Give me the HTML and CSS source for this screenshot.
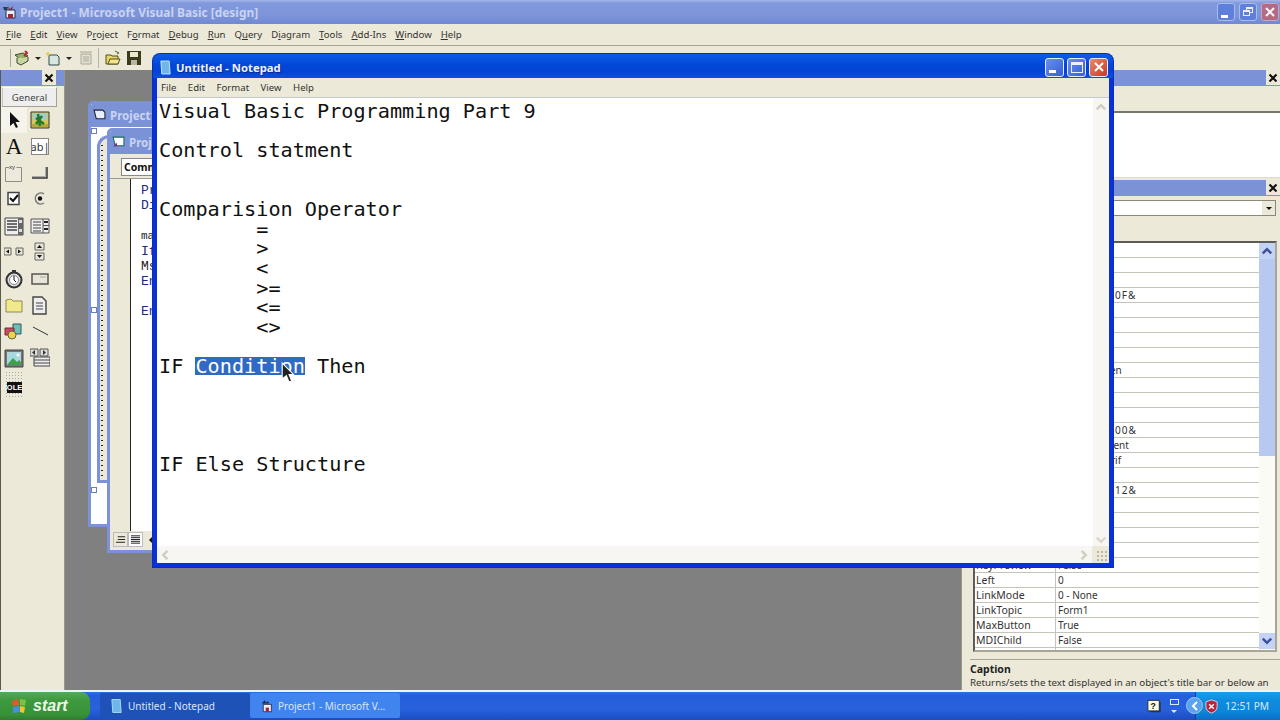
FILE: index.html
```html
<!DOCTYPE html>
<html lang="en">
<head>
<meta charset="utf-8">
<title>Untitled - Notepad</title>
<link rel="stylesheet" href="styles.css">
</head>
<body>
<div class="screen">
  <header class="vb-title">
    <svg class="vb-icon" viewBox="0 0 16 16"><path d="M1 3h5l-1 3H2z" fill="#2b3a55"/><path d="M4 6h9v8H4z" fill="#e9eef8" stroke="#20304f"/><path d="M6 2l2 3 3-3-1 4H7z" fill="#7a2a3a"/><path d="M6 10h5v4H6z" fill="#a8213a"/></svg>
    <span class="vb-title-text">Project1 - Microsoft Visual Basic [design]</span>
    <div class="vb-btns">
      <span class="vb-btn"><i class="min-bar"></i></span>
      <span class="vb-btn"><i class="restore-a"></i><i class="restore-b"></i></span>
      <span class="vb-btn vb-close"><svg class="x-ic" viewBox="0 0 12 12"><path d="M2 2l8 8m0-8l-8 8" stroke="#f4f0f4" stroke-width="2.200" fill="none"/></svg></span>
    </div>
  </header>
  <nav class="vb-menu">
    <span><u>F</u>ile</span><span><u>E</u>dit</span><span><u>V</u>iew</span><span>P<u>r</u>oject</span><span>F<u>o</u>rmat</span><span><u>D</u>ebug</span><span><u>R</u>un</span><span>Q<u>u</u>ery</span><span>D<u>i</u>agram</span><span><u>T</u>ools</span><span><u>A</u>dd-Ins</span><span><u>W</u>indow</span><span><u>H</u>elp</span>
  </nav>
  <div class="vb-toolbar">
    <i class="grip"></i>
    <svg class="tb-i" viewBox="0 0 16 16"><path d="M1 5l8-2 5 3-8 3z" fill="#9ab56a" stroke="#3a4a2a"/><path d="M3 8v5l4 2 7-4V7" fill="#c7d6a0" stroke="#3a4a2a"/><path d="M11 1l2 2-3 3" stroke="#b3263a" stroke-width="2" fill="none"/></svg>
    <i class="drop"></i>
    <svg class="tb-i tb-second" viewBox="0 0 16 16"><path d="M4 5h8l2 2v8H4z" fill="#d7e6e0" stroke="#2f4a4a"/><path d="M3 1l1 2 2 1-2 1-1 2-1-2-2-1 2-1z" fill="#e6cf5a"/></svg>
    <i class="drop"></i>
    <svg class="tb-i tb-faded" viewBox="0 0 16 16"><path d="M3 4h10v10H3z" fill="#e3e0d0" stroke="#aaa79a"/><path d="M5 7h6M5 9h6M5 11h6M2 2h12" stroke="#aaa79a" fill="none"/></svg>
    <i class="sep"></i>
    <svg class="tb-i" viewBox="0 0 16 16"><path d="M1 5h5l1 1h6v8H1z" fill="#e6d36a" stroke="#55501f"/><path d="M3 14l2-5h10l-2 5z" fill="#f3e68a" stroke="#55501f"/><path d="M10 1l4 2-2 1" stroke="#4a6a2a" fill="none"/></svg>
    <svg class="tb-i tb-save" viewBox="0 0 16 16"><path d="M1 1h14v14H1z" fill="#3c3c1c"/><path d="M4 2h8v5H4z" fill="#e9e6d2"/><path d="M5 10h6v5H5z" fill="#b9b7a4"/></svg>
  </div>

  <div class="workspace">
    <aside class="toolbox">
      <div class="panel-head"><span class="x-box"><svg class="x-ic-b" viewBox="0 0 10 10"><path d="M1.500 1.500l7 7m0-7l-7 7" stroke="#111" stroke-width="2.200" fill="none"/></svg></span></div>
      <div class="tab-general">General</div>
      <div class="tools">
        <span class="tool tool-on"><svg viewBox="0 0 20 20"><path d="M6 2l0 14 3.500-3 2.500 5 2-1-2.500-5h4.500z" fill="#111"/></svg></span>
        <span class="tool"><svg viewBox="0 0 20 20"><path d="M1 2h18v16H1z" fill="#d3c75a" stroke="#333"/><path d="M3 4h14v6H3z" fill="#9bd0c8"/><path d="M2 14h16v3H2z" fill="#b7a83a"/><path d="M8 4l2 12M6 8l8 6M12 6l-6 8" stroke="#1f7a2a" stroke-width="2.500"/></svg></span>
        <span class="tool tool-a">A</span>
        <span class="tool tool-ab">ab|</span>
        <span class="tool"><svg viewBox="0 0 20 20"><path d="M1.500 4.500v14h16v-14h-5M5 4.500H1.500" fill="#eee9dc" stroke="#8f8c80"/><text x="5" y="6" class="xy">xy</text></svg></span>
        <span class="tool"><svg viewBox="0 0 20 20"><path d="M17 4v11H2" fill="none" stroke="#333" stroke-width="1.500"/><path d="M2 13.500h13.500V4" fill="none" stroke="#aaa"/></svg></span>
        <span class="tool"><svg viewBox="0 0 20 20"><path d="M4 3.500h11v12H4z" fill="#fff" stroke="#444" stroke-width="1.500"/><path d="M6 9l3 3 5-6" fill="none" stroke="#111" stroke-width="2"/></svg></span>
        <span class="tool"><svg viewBox="0 0 20 20"><path d="M14 5a5.500 5.500 0 1 0 0 9" fill="none" stroke="#777" stroke-width="1.500"/><circle cx="10" cy="9.500" r="2.200" fill="#111"/></svg></span>
        <span class="tool"><svg viewBox="0 0 20 20"><path d="M1 2h18v17H1z" fill="#eee" stroke="#444"/><path d="M3 5h10M3 8h10M3 11h10M3 14h10" stroke="#444" stroke-width="1.500"/><path d="M14 2h5v17h-5z" fill="#666"/><path d="M15 4h3v3h-3zM15 13h3v3h-3z" fill="#ddd"/></svg></span>
        <span class="tool"><svg viewBox="0 0 20 20"><path d="M1 3h18v14H1z" fill="#eee" stroke="#555"/><path d="M3 6h8M3 9h8M3 12h8M3 15h8" stroke="#444"/><path d="M13 3v14M13 9.500h6" stroke="#555"/><path d="M14 6h4M14 13h4" stroke="#222" stroke-width="2"/></svg></span>
        <span class="tool"><svg viewBox="0 0 20 20"><path d="M0 6h7v7H0zM12 6h7v7h-7z" fill="#e8e5d8" stroke="#666"/><path d="M5 7.500v4l-3-2zM14 7.500v4l3-2z" fill="#111"/></svg></span>
        <span class="tool"><svg viewBox="0 0 20 20"><path d="M5 1h9v7H5zM5 11h9v7H5z" fill="#e8e5d8" stroke="#666"/><path d="M7 6h5L9.500 3zM7 13h5l-2.500 3z" fill="#111"/></svg></span>
        <span class="tool"><svg viewBox="0 0 20 20"><circle cx="10" cy="11" r="7.500" fill="#ddd" stroke="#333" stroke-width="2"/><circle cx="10" cy="11" r="4.500" fill="#fff" stroke="#888"/><path d="M8 1h4v2H8z" fill="#333"/><path d="M10 7v4l2 2" stroke="#111" fill="none"/></svg></span>
        <span class="tool"><svg viewBox="0 0 20 20"><path d="M2 5h16v10H2z" fill="#e8e5d8" stroke="#555" stroke-width="1.500"/><path d="M10 8h6" stroke="#aaa"/></svg></span>
        <span class="tool"><svg viewBox="0 0 20 20"><path d="M2 5l5-1 2 2h9v11H2z" fill="#f2ea8a" stroke="#8d8a50"/></svg></span>
        <span class="tool"><svg viewBox="0 0 20 20"><path d="M3 2h9l4 4v13H3z" fill="#eee" stroke="#444" stroke-width="1.400"/><path d="M6 8h7M6 11h7M6 14h7" stroke="#444"/></svg></span>
        <span class="tool"><svg viewBox="0 0 20 20"><path d="M9 3h8v10H9z" fill="#6cc0b8" stroke="#356"/><path d="M1 7h9v7H1z" fill="#d0446a" stroke="#633"/><circle cx="8" cy="14" r="4" fill="#ecd34d" stroke="#664"/></svg></span>
        <span class="tool"><svg viewBox="0 0 20 20"><path d="M3 6l15 8" stroke="#333"/></svg></span>
        <span class="tool"><svg viewBox="0 0 20 20"><path d="M1 2h18v17H1z" fill="#777" stroke="#444"/><path d="M3 4h14v13H3z" fill="#a9d8e0"/><path d="M3 17l6-7 4 4 2-2 2 2v3z" fill="#3ca04a"/><circle cx="14" cy="7" r="1.500" fill="#fff"/></svg></span>
        <span class="tool"><svg viewBox="0 0 20 20"><path d="M0 1h8v7H0zM10 1h8v7h-8z" fill="#ddd" stroke="#555"/><path d="M5 2v5L2 4.500zM13 2v5l3-2.500z" fill="#333"/><path d="M4 9v9h16v-9zM4 12h16M4 15h16" fill="#eee" stroke="#444"/></svg></span>
        <span class="tool tool-ole"><b>OLE</b></span>
      </div>
    </aside>

    <main class="mdi">
      <section class="child child-project">
        <div class="child-title"><svg class="child-icon" viewBox="0 0 12 12"><path d="M1 1h8l2 2v6H3z" fill="#e8eefc" stroke="#223"/></svg><span>Project1 - Form1 (Form)</span></div>
        <i class="handle handle-a"></i><i class="handle handle-b"></i><i class="handle handle-c"></i>
        <div class="form-inner"></div>
      </section>
      <section class="child child-code">
        <div class="child-title"><svg class="child-icon" viewBox="0 0 12 12"><path d="M1 1h10v8H3z" fill="#fff" stroke="#1c6a5a"/><path d="M1 10l3-4 1 3z" fill="#7a2a8a"/></svg><span>Project1 - Form1 (Code)</span></div>
        <div class="code-combo">Command1</div>
        <div class="code-body">
          <div class="code-gutter"></div>
          <pre class="code-text"><span class="kw">Private Sub Command1_Click()</span>
<span class="kw">Dim</span> a

<span class="ma">ma = 1</span>
<span class="kw">If</span> a = 1 Then
MsgBox "x"
<span class="kw">End If</span>

<span class="kw">End Sub</span></pre>
        </div>
        <div class="code-foot">
          <span class="view-btn"><svg viewBox="0 0 12 12"><path d="M3 3h8M3 6h8M1 9h10" stroke="#111" fill="none"/></svg></span>
          <span class="view-btn view-on"><svg viewBox="0 0 12 12"><path d="M1 2h10M1 4h10M1 6h10M1 8h10M1 10h10" stroke="#111" fill="none"/></svg></span>
          <span class="scroll-left"></span>
        </div>
      </section>
    </main>

    <aside class="side">
      <div class="panel-head panel-head-project"><span class="x-box"><svg class="x-ic-b" viewBox="0 0 10 10"><path d="M1.500 1.500l7 7m0-7l-7 7" stroke="#111" stroke-width="2.200" fill="none"/></svg></span></div>
      <div class="project-bar"></div>
      <div class="project-tree"></div>
      <div class="panel-head panel-head-prop"><span class="x-box"><svg class="x-ic-b" viewBox="0 0 10 10"><path d="M1.500 1.500l7 7m0-7l-7 7" stroke="#111" stroke-width="2.200" fill="none"/></svg></span></div>
      <div class="prop-combo-wrap"><div class="prop-combo"><span class="combo-arrow"></span></div></div>
      <div class="prop-tabs"></div>
      <div class="prop-grid">
        <div class="prop-rows">
          <div class="row"><span>(Name)</span><span>Form1</span></div>
          <div class="row"><span>Appearance</span><span>1 - 3D</span></div>
          <div class="row"><span>AutoRedraw</span><span>False</span></div>
          <div class="row"><span>BackColor</span><span class="hex">&amp;H8000000F&amp;</span></div>
          <div class="row"><span>BorderStyle</span><span>2 - Sizable</span></div>
          <div class="row"><span>Caption</span><span>Form1</span></div>
          <div class="row"><span>ClipControls</span><span>True</span></div>
          <div class="row"><span>ControlBox</span><span>True</span></div>
          <div class="row"><span>DrawMode</span><span>13 - Copy Pen</span></div>
          <div class="row"><span>DrawStyle</span><span>0 - Solid</span></div>
          <div class="row"><span>DrawWidth</span><span>1</span></div>
          <div class="row"><span>Enabled</span><span>True</span></div>
          <div class="row"><span>FillColor</span><span class="hex">&amp;H00000000&amp;</span></div>
          <div class="row"><span>FillStyle</span><span>1 - Transparent</span></div>
          <div class="row"><span>Font</span><span>MS Sans Serif</span></div>
          <div class="row"><span>FontTransparent</span><span>True</span></div>
          <div class="row"><span>ForeColor</span><span class="hex">&amp;H80000012&amp;</span></div>
          <div class="row"><span>HasDC</span><span>True</span></div>
          <div class="row"><span>Height</span><span>3600</span></div>
          <div class="row"><span>HelpContextID</span><span>0</span></div>
          <div class="row"><span>Icon</span><span>(Icon)</span></div>
          <div class="row"><span>KeyPreview</span><span>False</span></div>
          <div class="row"><span>Left</span><span>0</span></div>
          <div class="row"><span>LinkMode</span><span>0 - None</span></div>
          <div class="row"><span>LinkTopic</span><span>Form1</span></div>
          <div class="row"><span>MaxButton</span><span>True</span></div>
          <div class="row"><span>MDIChild</span><span>False</span></div>
          <div class="row"><span></span><span></span></div>
        </div>
        <div class="prop-scroll">
          <span class="sb-btn"><svg viewBox="0 0 10 10"><path d="M1.500 7l3.500-3.500L8.500 7" fill="none" stroke="#3a4f9a" stroke-width="2"/></svg></span>
          <span class="sb-thumb"></span>
          <span class="sb-space"></span>
          <span class="sb-btn sb-down"><svg viewBox="0 0 10 10"><path d="M1.500 3l3.500 3.500L8.500 3" fill="none" stroke="#3a4f9a" stroke-width="2"/></svg></span>
        </div>
      </div>
      <div class="prop-desc">
        <b>Caption</b>
        <span>Returns/sets the text displayed in an object's title bar or below an</span>
      </div>
    </aside>
  </div>

  <footer class="taskbar">
    <div class="start">
      <svg class="flag" viewBox="0 0 18 18"><path d="M2 4l6-2 1 6-6 1z" fill="#e2572c"/><path d="M10 2l6 1-1 6-5-1z" fill="#7cc242"/><path d="M3 10l6-1 1 6-7 1z" fill="#4a8ee0"/><path d="M10 9l5 1-1 6-4-1z" fill="#f2c62e"/></svg>
      <span>start</span>
    </div>
    <div class="task task-active">
      <svg class="task-ic" viewBox="0 0 14 16"><path d="M2 1h9l1 14H3z" fill="#6fb6ea" stroke="#a9dcf7"/></svg>
      <span>Untitled - Notepad</span>
    </div>
    <div class="task">
      <svg class="task-ic" viewBox="0 0 16 16"><path d="M2 5l4-4 1 3 3-2 1 3H5z" fill="#223"/><path d="M4 6h10v9H4z" fill="#eef" stroke="#223"/><path d="M7 10h4v5H7z" fill="#a8213a"/></svg>
      <span>Project1 - Microsoft V...</span>
    </div>
    <div class="task-fill">
      <svg class="help-ic" viewBox="0 0 16 16"><path d="M1 1h13v12H1z" fill="#fbfbe8" stroke="#222"/><path d="M15 3v11H4" stroke="#223" fill="none"/><text x="4" y="11" class="q">?</text></svg>
      <div class="lang-ic"><i></i><i></i></div>
    </div>
    <div class="tray">
      <span class="chevron"><svg viewBox="0 0 10 10"><path d="M7 1L3 5l4 4" fill="none" stroke="#fff" stroke-width="2"/></svg></span>
      <svg class="shield" viewBox="0 0 16 16"><path d="M8 1l6 2v5c0 4-3 6-6 7-3-1-6-3-6-7V3z" fill="#b8243a" stroke="#d8d8e8"/><path d="M5.500 5.500l5 5m0-5l-5 5" stroke="#fff" stroke-width="1.500"/></svg>
      <span class="clock">12:51 PM</span>
    </div>
  </footer>

  <section class="notepad">
    <div class="np-title">
      <svg class="np-icon" viewBox="0 0 14 16"><path d="M2 1h9l1 14H3z" fill="#6fb6ea" stroke="#c9ecfa"/></svg>
      <span class="np-title-text">Untitled - Notepad</span>
      <div class="np-btns">
        <span class="np-btn"><i class="np-min"></i></span>
        <span class="np-btn"><i class="np-max"></i></span>
        <span class="np-btn np-close"><svg class="x-ic" viewBox="0 0 12 12"><path d="M2 2l8 8m0-8l-8 8" stroke="#fff" stroke-width="2" fill="none"/></svg></span>
      </div>
    </div>
    <div class="np-body">
      <nav class="np-menu"><span>File</span><span>Edit</span><span>Format</span><span>View</span><span>Help</span></nav>
      <div class="np-edit">
        <pre class="np-text">Visual Basic Programming Part 9

Control statment


Comparision Operator
        =
        &gt;
        &lt;
        &gt;=
        &lt;=
        &lt;&gt;

IF <mark class="sel">Condition</mark> Then




IF Else Structure</pre>
        <div class="np-vscroll">
          <span class="np-arrow"><svg viewBox="0 0 10 10"><path d="M1.500 7l3.500-3.500L8.500 7" fill="none" stroke="#cfccc0" stroke-width="2"/></svg></span>
          <span class="np-arrow"><svg viewBox="0 0 10 10"><path d="M1.500 3l3.500 3.500L8.500 3" fill="none" stroke="#d9d6cb" stroke-width="2"/></svg></span>
        </div>
        <svg class="cursor" viewBox="0 0 14 20"><path d="M1 1v15l4-3 2.500 6 2.500-1-2.500-6H12z" fill="#222" stroke="#fff"/></svg>
      </div>
      <div class="np-hscroll">
        <span class="np-arrow"><svg viewBox="0 0 10 10"><path d="M7 1.500L3.500 5 7 8.500" fill="none" stroke="#d0cdc1" stroke-width="2"/></svg></span>
        <span class="np-arrow"><svg viewBox="0 0 10 10"><path d="M3 1.500L6.500 5 3 8.500" fill="none" stroke="#d0cdc1" stroke-width="2"/></svg></span>
        <span class="np-grip"></span>
      </div>
    </div>
  </section>
</div>
</body>
</html>
```
FILE: styles.css
```css
* { box-sizing: border-box; }
html, body { margin: 0; padding: 0; }
body { width: 1280px; height: 720px; overflow: hidden; font-family: "Noto Sans", "Liberation Sans", sans-serif; font-size: 10px; color: #111; }
i { display: block; }
.screen { position: relative; width: 1280px; height: 720px; display: flex; flex-direction: column; background: #ece9d8; overflow: hidden; }

/* main VB window */
.vb-title { height: 24px; flex: none; display: flex; align-items: center; padding-left: 2px; background: linear-gradient(#a5b8ea 0, #8199dc 3px, #7e95da 60%, #7089d2 100%); color: #c9d3f2; }
.vb-icon { width: 16px; height: 16px; margin-right: 2px; flex: none; }
.vb-title-text { font-weight: 700; font-size: 11.900px; }
.vb-btns { margin-left: auto; display: flex; gap: 4px; padding-right: 1px; }
.vb-btn { position: relative; width: 18px; height: 18px; border-radius: 3px; background: #5f80da; border: 1px solid #a9bcec; display: flex; align-items: center; justify-content: center; }
.vb-close { background: #b36a85; border-color: #c9a5bb; }
.x-ic { width: 12px; height: 12px; }
.x-ic-b { width: 10px; height: 10px; }
.min-bar { width: 7px; height: 3px; background: #fff; margin-top: 8px; margin-right: 3px; }
.restore-a, .restore-b { position: absolute; width: 7px; height: 6px; border: 1px solid #eef; border-top-width: 2px; }
.restore-a { left: 6px; top: 3px; }
.restore-b { left: 3px; top: 6px; background: #5f80da; }

.vb-menu { height: 22px; flex: none; display: flex; align-items: center; padding-left: 6px; gap: 9px; background: #ece9d8; border-bottom: 1px solid #a5a293; }
.vb-menu span { font-size: 9.600px; color: #333; }
.vb-menu u { text-underline-offset: 1px; }
.vb-toolbar { height: 24px; flex: none; display: flex; align-items: center; padding-left: 10px; background: #ece9d8; }
.grip { width: 1px; height: 18px; background: #a8a597; margin-right: 3px; }
.tb-i { width: 16px; height: 16px; flex: none; }
.tb-second { margin-left: 4px; }
.tb-faded { margin-left: 6px; }
.tb-save { margin-left: 5px; }
.drop { width: 0; height: 0; border: 3px solid transparent; border-top: 3px solid #222; border-bottom: 0; margin-left: 5px; }
.sep { width: 1px; height: 20px; background: #b7b4a5; margin: 0 6px 0 4px; }

.workspace { flex: 1; display: flex; min-height: 0; }
.toolbox { width: 64px; flex: none; background: #ece9d8; display: flex; flex-direction: column; border-left: 1px solid #5a5950; }
.panel-head { height: 16px; background: #7b93d6; display: flex; justify-content: flex-end; flex: none; }
.toolbox .panel-head { padding-right: 8px; }
.x-box { width: 14px; height: 15px; background: #ece9d8; display: flex; align-items: center; justify-content: center; }
.tab-general { width: 55px; height: 20px; margin: 1px 0 0 1px; display: flex; align-items: center; justify-content: center; font-size: 9.600px; color: #444; background: #eee; border: 1px solid #c9c6b6; border-right-color: #a5a293; border-bottom-color: #a5a293; border-top-color: #fff; }
.tools { display: grid; grid-template-columns: 26px 26px; grid-auto-rows: 26.400px; padding: 0; }
.tool { display: flex; align-items: center; justify-content: center; }
.tool svg { width: 20px; height: 20px; }
.tool-on { background: #f5f3ea; }
.tool-a { font-family: "Liberation Serif", serif; font-size: 23px; color: #111; }
.tool-ab { width: 18px; height: 17px; margin: auto; background: #fff; border: 1px solid #888; font-size: 11px; color: #333; line-height: 1; overflow: hidden; }
.xy { font-size: 6px; font-family: "Liberation Sans", sans-serif; fill: #333; }
.tool-ole { align-items: flex-end; padding-bottom: 4px; width: 19px; margin-left: 4px; background-image: radial-gradient(#aaa .6px, transparent .7px); background-size: 3px 3px; }
.tool-ole b { display: flex; align-items: center; justify-content: center; width: 15px; height: 11px; background: #111; color: #fff; font-family: "Liberation Sans", sans-serif; font-size: 7.500px; font-weight: 700; }

.mdi { flex: 1; position: relative; background: #808080; border-left: 1px solid #9a9889; }
.child { position: absolute; background: #fff; border: 3px solid #7b93d6; border-radius: 5px 5px 0 0; overflow: hidden; }
.child-title { height: 23px; background: #7b93d6; display: flex; align-items: center; padding-left: 2px; color: #c9d3f2; font-weight: 700; font-size: 11.500px; white-space: nowrap; }
.child-icon { width: 13px; height: 13px; margin-right: 4px; flex: none; }
.child-project { left: 23px; top: 31px; width: 80px; height: 426px; }
.form-inner { position: absolute; left: 6px; top: 31px; width: 70px; height: 348px; background: #ece9d8; border: 3px solid #7b93d6; border-right: 0; border-top-left-radius: 12px; background-image: radial-gradient(#222 .6px, transparent .7px); background-size: 8px 5px; background-position: -2px 0; }
.handle { position: absolute; width: 6px; height: 6px; background: #fff; border: 1px solid #6b7fba; z-index: 2; left: 0; }
.handle-a { top: 24px; }
.handle-b { top: 203px; }
.handle-c { top: 383px; }
.child-code { left: 42px; top: 58px; width: 120px; height: 425px; background: #ece9d8; }
.code-combo { height: 18px; margin: 4px 3px 0 11px; background: #fff; border: 1px solid #888; font-weight: 700; font-size: 10.500px; line-height: 14px; padding: 1px 2px; color: #111; white-space: nowrap; overflow: hidden; }
.code-body { height: 353px; margin-top: 2px; display: flex; background: #fff; border-top: 1px solid #999; }
.code-gutter { width: 21px; flex: none; background: #ece9d8; border-right: 1px solid #222; }
.code-text { margin: 0; padding: 4px 0 0 10px; font-family: "Liberation Mono", monospace; font-size: 13px; line-height: 15px; color: #222; white-space: pre; overflow: hidden; }
.kw { color: #1a2a80; }
.ma { font-size: 11px; }
.code-foot { height: 17px; display: flex; align-items: center; background: #ece9d8; padding-left: 3px; }
.view-btn { width: 15px; height: 15px; display: flex; align-items: center; justify-content: center; border: 1px solid #bbb; }
.view-on { background: #fff; }
.view-btn svg { width: 11px; height: 11px; }
.scroll-left { width: 0; height: 0; border: 5px solid transparent; border-right: 5px solid #111; border-left: 0; margin-left: 6px; }

.side { width: 319px; flex: none; display: flex; flex-direction: column; background: #ece9d8; border-left: 1px solid #9a9889; }
.panel-head-project { height: 16px; }
.project-bar { height: 27px; flex: none; border-bottom: 2px solid #77766c; }
.project-tree { height: 65px; background: #fff; flex: none; border-bottom: 1px solid #dedbcb; }
.panel-head-prop { margin-top: 2px; }
.prop-combo-wrap { height: 25px; flex: none; padding: 4px 4px 0 4px; }
.prop-combo { height: 16px; background: #fff; border: 1px solid #8a887a; position: relative; }
.combo-arrow { position: absolute; right: 0; top: 0; width: 13px; height: 14px; background: #ece9d8; }
.combo-arrow::after { content: ""; position: absolute; left: 4px; top: 6px; border: 3px solid transparent; border-top: 3px solid #111; border-bottom: 0; }
.prop-tabs { height: 20px; flex: none; }
.prop-grid { height: 411px; margin: 0 3px 0 11px; flex: none; background: #fff; border: 2px solid #5e5d55; border-right-color: #a9a698; border-bottom-color: #a9a698; display: flex; overflow: hidden; }
.prop-rows { flex: 1; min-width: 0; }
.row { height: 15px; display: grid; grid-template-columns: 80px 1fr; border-bottom: 1px solid #c6c4b8; font-size: 10.500px; line-height: 14px; color: #333; white-space: nowrap; }
.row span { padding-left: 1px; overflow: hidden; }
.row span + span { border-left: 1px solid #c6c4b8; padding-left: 2px; font-size: 10px; }
.row span.hex { letter-spacing: 1px; }
.prop-scroll { width: 16px; flex: none; display: flex; flex-direction: column; background: #fbfbf6; }
.sb-btn { height: 16px; flex: none; background: #c4d2f3; display: flex; align-items: center; justify-content: center; }
.sb-btn svg { width: 12px; height: 12px; }
.sb-thumb { height: 197px; flex: none; background: #b9c8f1; }
.sb-space { flex: 1; }
.sb-down { margin-bottom: 1px; }
.prop-desc { height: 37px; flex: none; margin: 7px 0 0 8px; padding: 2px 0 0 0; display: flex; flex-direction: column; border-top: 1px solid #a9a698; }
.prop-desc b { font-size: 10.500px; line-height: 14px; color: #222; }
.prop-desc span { font-size: 9.750px; line-height: 14px; color: #333; white-space: nowrap; overflow: hidden; }

/* taskbar */
.taskbar { height: 30px; flex: none; display: flex; align-items: stretch; background: linear-gradient(#2f6fe6 0, #245edb 12%, #2a62dc 60%, #1b4cc2 100%); border-top: 2px solid #f2f2f2; color: #e9eeff; }
.start { width: 90px; flex: none; display: flex; align-items: center; padding-left: 10px; gap: 5px; background: linear-gradient(#57a957 0, #3d9a3d 30%, #389238 80%, #2f7d2f 100%); border-radius: 0 9px 9px 0; color: #eef6ea; }
.flag { width: 18px; height: 18px; flex: none; }
.start span { font-family: "Liberation Sans", sans-serif; font-style: italic; font-weight: 700; font-size: 16px; }
.task { width: 150px; flex: none; display: flex; align-items: center; padding-left: 10px; gap: 5px; margin: 1px 0 2px; background: #3f84ef; font-size: 10px; color: #dbe6fb; border-radius: 2px; white-space: nowrap; }
.task-active { margin-left: 10px; background: #1e52b7; }
.task-ic { width: 13px; height: 16px; flex: none; }
.task-fill { flex: 1; display: flex; align-items: center; justify-content: flex-end; gap: 9px; padding-right: 16px; }
.help-ic { width: 14px; height: 15px; }
.q { font-size: 10px; font-weight: 700; font-family: "Liberation Sans", sans-serif; fill: #111; }
.lang-ic { width: 9px; display: flex; flex-direction: column; gap: 5px; }
.lang-ic i:first-child { height: 6px; border: 1px solid #dfe7fb; }
.lang-ic i:last-child { width: 0; height: 0; border: 3px solid transparent; border-top: 3px solid #dfe7fb; border-bottom: 0; margin-left: 1px; }
.tray { width: 85px; flex: none; display: flex; align-items: center; background: linear-gradient(#18a0e8 0, #0e8ce0 30%, #0c86d8 70%, #0b6cc6 100%); border-left: 1px solid #0d3f9e; position: relative; padding-left: 8px; }
.chevron { position: absolute; left: -10px; top: 5px; width: 17px; height: 17px; border-radius: 50%; background: #5aa2ee; border: 1px solid #9cc7f7; display: flex; align-items: center; justify-content: center; }
.chevron svg { width: 10px; height: 10px; }
.shield { width: 15px; height: 15px; flex: none; }
.clock { margin-left: 6px; font-size: 10.200px; color: #dbe9fb; white-space: nowrap; }

/* notepad on top of the desktop */
.notepad { position: absolute; left: 153px; top: 54px; width: 960px; height: 513px; background: #0831d9; border-radius: 7px 7px 0 0; display: flex; flex-direction: column; box-shadow: 0 0 0 1px #0a2fb0; }
.np-title { height: 24px; flex: none; display: flex; align-items: center; padding: 2px 0 0 6px; border-radius: 7px 7px 0 0; background: linear-gradient(#0a5be0 0, #0a58e4 12%, #0347d8 45%, #0344d4 75%, #0a50e0 100%); color: #eef3ff; }
.np-icon { width: 13px; height: 15px; margin-right: 4px; flex: none; }
.np-title-text { font-weight: 700; font-size: 11.300px; text-shadow: 1px 1px #0a2a90; }
.np-btns { margin-left: auto; display: flex; gap: 3px; padding-right: 5px; }
.np-btn { width: 19px; height: 19px; border-radius: 3px; background: linear-gradient(135deg, #6a8fe8, #3560d8); border: 1px solid #e6ecff; display: flex; align-items: center; justify-content: center; }
.np-close { background: linear-gradient(135deg, #e58a70, #c93a20); }
.np-min { width: 7px; height: 3px; background: #fff; margin: 8px 5px 0 0; }
.np-max { width: 12px; height: 11px; border: 1px solid #eef; border-top-width: 3px; }
.np-body { flex: 1; margin: 0 4px 4px 4px; min-height: 0; display: flex; flex-direction: column; background: #fff; }
.np-menu { height: 20px; flex: none; display: flex; align-items: center; padding-left: 4px; gap: 11.500px; background: #ece9d8; border-bottom: 1px solid #c4c6e0; font-size: 9.600px; color: #333; }
.np-edit { flex: 1; position: relative; min-height: 0; background: #fff; overflow: hidden; }
.np-text { margin: 0; padding: 3.600px 0 0 2px; font-family: "DejaVu Sans Mono", monospace; font-size: 20.200px; line-height: 19.660px; color: #111; white-space: pre; }
.sel { display: inline-block; line-height: 18px; background: #316ac5; color: #fff; }
.np-vscroll { position: absolute; right: 0; top: 0; bottom: 0; width: 16px; background: #f7f6f2; display: flex; flex-direction: column; justify-content: space-between; align-items: center; padding-top: 3px; }
.np-arrow { width: 12px; height: 12px; display: flex; }
.np-arrow svg { width: 12px; height: 12px; }
.cursor { position: absolute; left: 124px; top: 264px; width: 15px; height: 21px; }
.np-hscroll { height: 17px; flex: none; position: relative; background: #f7f6f2; display: flex; align-items: center; justify-content: space-between; padding: 0 19px 0 2px; }
.np-grip { position: absolute; right: 0; top: 0; width: 17px; height: 17px; background: #ece9d8; }
.np-grip::after { content: ""; position: absolute; right: 2px; bottom: 2px; width: 11px; height: 11px; background-image: radial-gradient(#bab7a6 1px, transparent 1.200px); background-size: 4px 4px; }
```
